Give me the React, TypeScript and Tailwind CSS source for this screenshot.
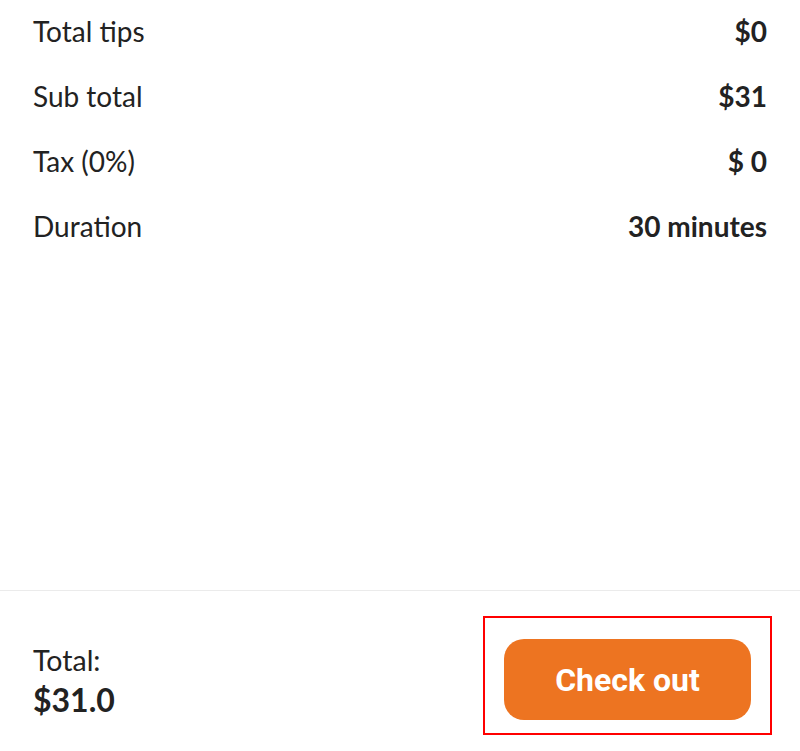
const rows = [
  { label: "Total tips", value: "$0" },
  { label: "Sub total", value: "$31" },
  { label: "Tax (0%)", value: "$ 0" },
  { label: "Duration", value: "30 minutes" },
];

export default function App() {
  return (
    <div className="flex h-[751px] w-full flex-col bg-white font-['Lato',sans-serif] text-[#222]">
      {/* Summary rows */}
      <div className="-mt-[2px] flex flex-1 flex-col px-[33px]">
        {rows.map((r) => (
          <div key={r.label} className="flex h-[65px] items-center justify-between text-[28px]">
            <span>{r.label}</span>
            <span className="font-bold">{r.value}</span>
          </div>
        ))}
      </div>

      {/* Footer */}
      <div className="flex h-[161px] items-start justify-between border-t border-[#ebebeb] pl-[33px] pr-[28px] pt-[25px]">
        <div className="mt-[25px] flex flex-col">
          <span className="text-[28.5px] leading-[38px]">Total:</span>
          <span className="text-[32px] font-bold leading-[42px]">$31.0</span>
        </div>
        <div className="border-2 border-[#ff0000] px-[19px] pb-[13px] pt-[21px]">
          <button className="flex h-[81px] w-[247px] items-center justify-center rounded-[20px] bg-[#ed7421] font-['Roboto',sans-serif] text-[32px] font-bold text-white">
            Check out
          </button>
        </div>
      </div>
    </div>
  );
}
